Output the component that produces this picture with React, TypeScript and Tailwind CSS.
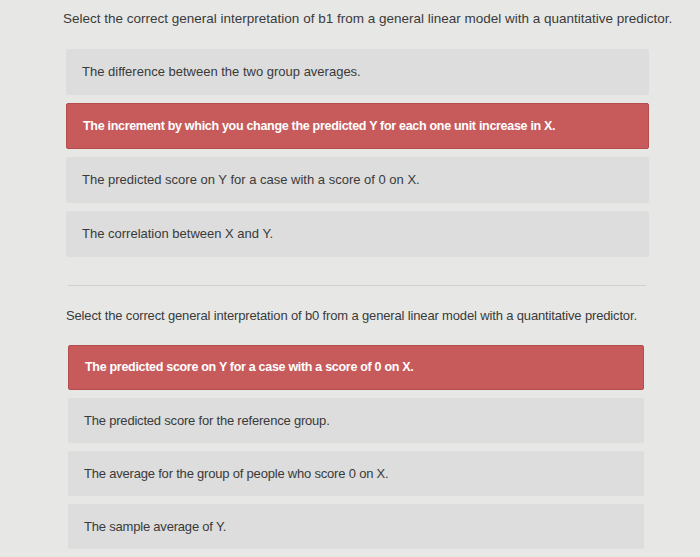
import React from "react";

type Opt = { text: string; selected?: boolean };

const q1: Opt[] = [
  { text: "The difference between the two group averages." },
  { text: "The increment by which you change the predicted Y for each one unit increase in X.", selected: true },
  { text: "The predicted score on Y for a case with a score of 0 on X." },
  { text: "The correlation between X and Y." },
];

const q2: Opt[] = [
  { text: "The predicted score on Y for a case with a score of 0 on X.", selected: true },
  { text: "The predicted score for the reference group." },
  { text: "The average for the group of people who score 0 on X." },
  { text: "The sample average of Y." },
];

function Option({ o, h, track }: { o: Opt; h: string; track: string }) {
  return (
    <div
      className={
        o.selected
          ? `${h} flex items-center px-4 rounded-[2px] bg-[#c75b5c] border border-[#b54c4e] text-white font-bold text-[12.5px] tracking-[-0.3px]`
          : `${h} flex items-center px-4 rounded-[2px] bg-[#dcdddc] text-[#3a3a3a] text-[13px] ${track}`
      }
    >
      {o.text}
    </div>
  );
}

export default function App() {
  return (
    <div
      className="w-[700px] h-[557px] bg-[#e7e8e6] overflow-hidden"
      style={{ fontFamily: '"Liberation Sans", Arial, sans-serif' }}
    >
      <div className="ml-[66px] w-[583px] pt-[11px]">
        <div className="-ml-[3px] h-[16px] leading-[16px] text-[13.5px] text-[#3a3a3a] whitespace-nowrap">
          Select the correct general interpretation of b1 from a general linear model with a quantitative predictor.
        </div>
        <div className="mt-[22px] flex flex-col gap-[8px]">
          {q1.map((o, i) => (
            <Option key={i} o={o} h="h-[46px]" track="tracking-[0px]" />
          ))}
        </div>
        <div className="mt-[28px] h-px bg-[#cfd0cf] w-[578px] ml-[2px]" />
        <div className="mt-[22px] h-[16px] leading-[16px] text-[13px] text-[#3a3a3a] tracking-[-0.15px] whitespace-nowrap">
          Select the correct general interpretation of b0 from a general linear model with a quantitative predictor.
        </div>
        <div className="mt-[21px] ml-[2px] w-[576px] flex flex-col gap-[8px]">
          {q2.map((o, i) => (
            <Option key={i} o={o} h="h-[45px]" track="tracking-[-0.2px]" />
          ))}
        </div>
      </div>
    </div>
  );
}
